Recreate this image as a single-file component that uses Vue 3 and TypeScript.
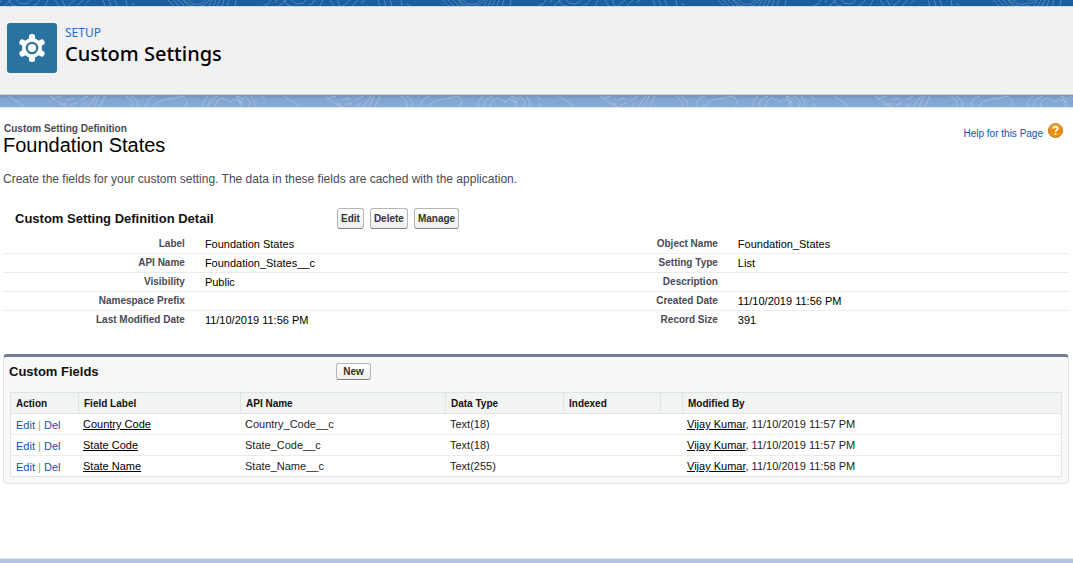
<script setup lang="ts">
interface Detail { label: string; value: string }
interface Field { label: string; api: string; type: string; indexed: string; by: string; at: string }

const details: [Detail, Detail][] = [
  [{ label: 'Label', value: 'Foundation States' }, { label: 'Object Name', value: 'Foundation_States' }],
  [{ label: 'API Name', value: 'Foundation_States__c' }, { label: 'Setting Type', value: 'List' }],
  [{ label: 'Visibility', value: 'Public' }, { label: 'Description', value: '' }],
  [{ label: 'Namespace Prefix', value: '' }, { label: 'Created Date', value: '11/10/2019 11:56 PM' }],
  [{ label: 'Last Modified Date', value: '11/10/2019 11:56 PM' }, { label: 'Record Size', value: '391' }],
]

const fields: Field[] = [
  { label: 'Country Code', api: 'Country_Code__c', type: 'Text(18)', indexed: '', by: 'Vijay Kumar', at: '11/10/2019 11:57 PM' },
  { label: 'State Code', api: 'State_Code__c', type: 'Text(18)', indexed: '', by: 'Vijay Kumar', at: '11/10/2019 11:57 PM' },
  { label: 'State Name', api: 'State_Name__c', type: 'Text(255)', indexed: '', by: 'Vijay Kumar', at: '11/10/2019 11:58 PM' },
]
</script>

<template>
  <div class="page">
    <div class="band band-top">
      <svg width="100%" height="6" aria-hidden="true">
        <defs>
          <pattern id="contour-top" width="275" height="6" patternUnits="userSpaceOnUse">
            <g fill="none" stroke="#5f8fc0" stroke-width="0.8">
              <path d="M0 3L2 0M4 6L11 0M9 0Q11 6 17 6M16 0Q19 4 24 4T31 0M33 6Q38 4 40 0M45 6L48 0M55 0L59 6M62 0L65 6M68 6L75 0M77 6L83 0M86 3L90 0M103 0L105 6M109 0L111 6M115 0L117 6M126 0L127 6M132 3L134 6" />
              <path d="M168 0L174 6M173 0L179 6M178 0L184 6M183 0L188 6M188 0Q197 9 206 0M184 0Q197 14 210 0M212 0L209 6M216 0L213 6M220 0L217 6M224 0L222 6M229 0L227 6M236 0L235 6M263 6Q269 5 271 0" />
            </g>
          </pattern>
        </defs>
        <rect width="100%" height="6" fill="url(#contour-top)" />
      </svg>
    </div>
    <header class="header">
      <span class="tile">
        <svg width="26" height="28" viewBox="0 0 26 28" aria-hidden="true">
          <g fill="#fff">
            <circle cx="13" cy="14" r="10" />
            <rect x="10" y="0" width="6" height="28" rx="2.500" />
            <rect x="10" y="0" width="6" height="28" rx="2.500" transform="rotate(60 13 14)" />
            <rect x="10" y="0" width="6" height="28" rx="2.500" transform="rotate(120 13 14)" />
          </g>
          <circle cx="13" cy="14" r="5.200" fill="#fff" stroke="#2a739e" stroke-width="2.200" />
        </svg>
      </span>
      <div class="titles">
        <span class="eyebrow">SETUP</span>
        <h1>Custom Settings</h1>
      </div>
    </header>
    <div class="band band-low">
      <svg width="100%" height="12" aria-hidden="true">
        <defs>
          <pattern id="contour-low" width="275" height="12" patternUnits="userSpaceOnUse">
            <g fill="none" stroke="#a9c1df" stroke-width="0.8">
              <path d="M9 1Q14 5 18 7T23 12M50 1Q55 5 61 9L68 12M52 4L61 1M61 9H67M67 5L75 3M70 10L77 8M81 5L88 1M81 11L86 8M88 12L96 1M94 12L99 1M100 12L105 1" />
              <path d="M126 1Q134 6 132 12M131 1Q140 6 137 12M146 12Q145 4 155 1M153 12Q158 5 168 4T181 1Q191 4 185 12M203 12Q202 5 208 1M208 12Q209 4 218 1M215 12Q216 5 222 3L231 7L234 4L241 7L236 1L244 4M238 9L242 6L240 11M244 1Q253 6 249 12M251 1Q257 7 254 12M262 1L265 5M264 8V12" />
            </g>
          </pattern>
        </defs>
        <rect width="100%" height="12" fill="url(#contour-low)" />
      </svg>
    </div>

    <main class="content">
      <div class="intro">
        <div>
          <p class="kind">Custom Setting Definition</p>
          <h2>Foundation States</h2>
        </div>
        <a class="help" href="#">
          <span>Help for this Page</span>
          <svg width="15" height="15" viewBox="0 0 15 15" aria-hidden="true">
            <defs>
              <linearGradient id="help-fill" x1="0" y1="0" x2="0" y2="1">
                <stop offset="0" stop-color="#f6b348" />
                <stop offset="0.500" stop-color="#ea8a05" />
                <stop offset="1" stop-color="#f29b12" />
              </linearGradient>
            </defs>
            <circle cx="7.500" cy="7.500" r="7" fill="url(#help-fill)" stroke="#b9751b" />
            <path d="M5.300 5.700C5.300 3.400 9.700 3.300 9.700 5.700C9.700 7.200 7.500 7.200 7.500 9" fill="none" stroke="#fff" stroke-width="1.700" />
            <rect x="6.600" y="10" width="1.800" height="1.800" fill="#fff" />
          </svg>
        </a>
      </div>
      <p class="lead">Create the fields for your custom setting. The data in these fields are cached with the application.</p>

      <section>
        <div class="detail-head">
          <h3>Custom Setting Definition Detail</h3>
          <div class="actions">
            <button type="button">Edit</button>
            <button type="button">Delete</button>
            <button type="button">Manage</button>
          </div>
        </div>
        <table class="details">
          <tbody>
            <tr v-for="(row, i) in details" :key="i">
              <template v-for="cell in row" :key="cell.label">
                <th scope="row">{{ cell.label }}</th>
                <td>{{ cell.value }}</td>
              </template>
            </tr>
          </tbody>
        </table>
      </section>

      <section class="related">
        <div class="related-head">
          <h3>Custom Fields</h3>
          <button type="button" class="new">New</button>
        </div>
        <table class="fields">
          <colgroup>
            <col class="c-action"><col class="c-label"><col class="c-api"><col class="c-type"><col class="c-indexed"><col class="c-blank"><col>
          </colgroup>
          <thead>
            <tr>
              <th scope="col">Action</th>
              <th scope="col">Field Label</th>
              <th scope="col">API Name</th>
              <th scope="col">Data Type</th>
              <th scope="col">Indexed</th>
              <td></td>
              <th scope="col">Modified By</th>
            </tr>
          </thead>
          <tbody>
            <tr v-for="f in fields" :key="f.api">
              <td class="act"><a href="#">Edit</a> | <a href="#">Del</a></td>
              <td><a class="plain" href="#">{{ f.label }}</a></td>
              <td>{{ f.api }}</td>
              <td>{{ f.type }}</td>
              <td>{{ f.indexed }}</td>
              <td></td>
              <td><a class="plain" href="#">{{ f.by }}</a>, {{ f.at }}</td>
            </tr>
          </tbody>
        </table>
      </section>
    </main>
    <footer class="foot"></footer>
  </div>
</template>

<style>
body { margin: 0; background: #fff; }
</style>

<style scoped>
.page { display: flex; flex-direction: column; min-height: 100vh; font-family: "Liberation Sans", Arial, sans-serif; font-size: 11px; color: #222; }
h1, h2, h3, p { margin: 0; }
.band { overflow: hidden; }
.band svg { display: block; }
.band-top { background: #1b5f9e; }
.header { display: flex; align-items: flex-start; gap: 8px; box-sizing: border-box; min-height: 89px; padding: 16px 7px; background: #f1f1f1; border-top: 1px solid #d5d5d5; border-bottom: 1px solid #d5d3cd; }
.tile { display: flex; align-items: center; justify-content: center; width: 50px; height: 50px; border-radius: 3px; background: #2a739e; }
.titles { font-family: "Noto Sans", sans-serif; padding-top: 1px; }
.eyebrow { display: block; font-size: 12px; line-height: 18px; color: #1b70cc; }
h1 { font-size: 20px; line-height: 24px; font-weight: 500; color: #000; }
.band-low { background: linear-gradient(#6f92bb, #82a4ce 4px, #8aabd3); border-bottom: 1px solid #dce6f2; }
.content { flex: 1; padding: 15px 4px 20px 3px; }
.intro { display: flex; justify-content: space-between; }
.kind { padding-left: 1px; font-size: 10px; line-height: 12px; font-weight: bold; color: #4a4a56; }
h2 { font-size: 20px; line-height: 20px; font-weight: normal; color: #000; }
.help { display: flex; gap: 5px; align-items: flex-start; padding-right: 6px; font-size: 10px; line-height: 22px; color: #015ba7; text-decoration: none; }
.lead { margin-top: 16px; font-size: 12px; line-height: 16px; color: #4a4a56; }
.detail-head { display: flex; align-items: center; margin-top: 21px; padding-left: 12px; }
.detail-head h3 { width: 322px; }
h3 { font-size: 13px; line-height: 21px; font-weight: bold; color: #111; }
.actions { display: flex; gap: 6px; }
button { box-sizing: border-box; height: 21px; padding: 0 3px; border: 1px solid #b5b5b5; border-bottom-color: #7f7f7f; border-radius: 3px; background: linear-gradient(#fff, #eee); font: bold 10px/18px "Liberation Sans", Arial, sans-serif; color: #333; }
table { width: 100%; border-collapse: separate; border-spacing: 0; table-layout: fixed; }
.details { margin-top: 6px; }
.details th, .details td { box-sizing: border-box; height: 19px; padding: 0 10px; border-bottom: 1px solid #ececec; line-height: 18px; }
.details tr:last-child > * { border-bottom-color: transparent; }
.details th { width: 18%; text-align: right; font-size: 10px; color: #4a4a56; }
.details td { width: 32%; color: #000; }
.related { margin-top: 24px; padding: 0 6px 6px; border: 1px solid #e0e3e5; border-top: 3px solid #747e96; border-radius: 4px; background: #f8f8f8; }
.related-head { display: flex; align-items: center; gap: 1px; height: 29px; margin-left: -1px; padding-bottom: 6px; }
.related-head h3 { width: 326px; }
.new { width: 35px; height: 17px; line-height: 14px; }
.fields { box-sizing: border-box; background: #fff; border: 1px solid #e0e3e5; }
.c-action { width: 68px; }
.c-label { width: 162px; }
.c-api { width: 205px; }
.c-type { width: 118px; }
.c-indexed { width: 97px; }
.c-blank { width: 22px; }
.fields thead > tr > * { height: 21px; box-sizing: border-box; padding: 1px 5px 0; border: 0 solid #e0e3e5; border-width: 0 1px 1px 0; background: #f2f3f3; text-align: left; font-size: 10px; line-height: 19px; color: #111; }
.fields thead > tr > :last-child { border-right: 0; }
.fields tbody td { box-sizing: border-box; padding: 1px 4px; border-bottom: 1px solid #ececec; line-height: 18px; vertical-align: top; }
.fields tbody tr:last-child td { border-bottom: 0; }
.fields tbody .act { padding: 2px 5px 0; color: #999; }
.act a { color: #015ba7; text-decoration: none; }
.plain { color: #000; text-decoration: underline; }
.foot { height: 4px; border-top: 1px solid #e4e4e4; background: #b0c4df; }
</style>
